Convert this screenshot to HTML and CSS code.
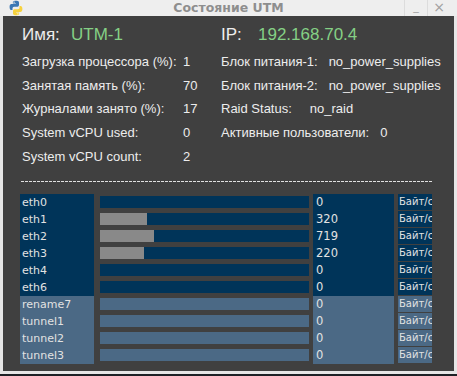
FILE: index.html
```html
<!DOCTYPE html>
<html lang="ru">
<head>
<meta charset="utf-8">
<title>Состояние UTM</title>
<link rel="stylesheet" href="styles.css">
</head>
<body>
<div class="titlebar">
  <div class="tb-left">
    <svg class="pyicon" width="16" height="16" viewBox="0 0 16 16">
      <path d="M7.8 0.8c-3 0-2.9 1.3-2.9 1.3v1.5h3v0.5H3.7S1.6 3.8 1.6 7s1.8 3.1 1.8 3.1h1.1V8.6s-0.1-1.8 1.8-1.8h3s1.7 0 1.7-1.7V2.5S11.3 0.8 7.8 0.8z" fill="#3b77b4"/>
      <circle cx="6.1" cy="2.2" r="0.6" fill="#fff"/>
      <path d="M8.2 15.2c3 0 2.9-1.3 2.9-1.3v-1.5h-3v-0.5h4.2s2.1 0.3 2.1-2.9-1.8-3.1-1.8-3.1h-1.1v1.5s0.1 1.8-1.8 1.8h-3s-1.7 0-1.7 1.7v2.6s-0.3 1.7 3.2 1.7z" fill="#f7d23e"/>
      <circle cx="9.9" cy="13.8" r="0.6" fill="#fff"/>
    </svg>
  </div>
  <div class="title">Состояние UTM</div>
  <div class="tb-right">
    <span class="wbtn">_</span>
    <span class="wbtn close">×</span>
  </div>
</div>
<div class="frame">
  <div class="content">
    <div class="info">
      <div class="col left">
        <div class="hdr"><span class="hkey hkey-l">Имя:</span><span class="green">UTM-1</span></div>
        <div class="rows">
          <div class="row"><span class="lab">Загрузка процессора (%):</span><span>1</span></div>
          <div class="row"><span class="lab">Занятая память (%):</span><span>70</span></div>
          <div class="row"><span class="lab">Журналами занято (%):</span><span>17</span></div>
          <div class="row"><span class="lab">System vCPU used:</span><span>0</span></div>
          <div class="row"><span class="lab">System vCPU count:</span><span>2</span></div>
        </div>
      </div>
      <div class="col right">
        <div class="hdr"><span class="hkey hkey-r">IP:</span><span class="green">192.168.70.4</span></div>
        <div class="rows">
          <div class="row"><span class="rlab">Блок питания-1:</span><span class="rval">no_power_supplies</span></div>
          <div class="row"><span class="rlab">Блок питания-2:</span><span class="rval">no_power_supplies</span></div>
          <div class="row"><span class="rlab">Raid Status:</span><span class="rval wide">no_raid</span></div>
          <div class="row"><span class="rlab">Активные пользователи:</span><span class="rval">0</span></div>
        </div>
      </div>
    </div>
    <div class="dash"></div>
    <div class="table">
      <div class="trow"><div class="name">eth0</div><div class="barwrap"><div class="bar"></div></div><div class="num">0</div><div class="unit">Байт/с</div></div>
      <div class="trow"><div class="name">eth1</div><div class="barwrap"><div class="bar"><div class="fill" style="width:47px"></div></div></div><div class="num">320</div><div class="unit">Байт/с</div></div>
      <div class="trow"><div class="name">eth2</div><div class="barwrap"><div class="bar"><div class="fill" style="width:54px"></div></div></div><div class="num">719</div><div class="unit">Байт/с</div></div>
      <div class="trow"><div class="name">eth3</div><div class="barwrap"><div class="bar"><div class="fill" style="width:44px"></div></div></div><div class="num">220</div><div class="unit">Байт/с</div></div>
      <div class="trow"><div class="name">eth4</div><div class="barwrap"><div class="bar"></div></div><div class="num">0</div><div class="unit">Байт/с</div></div>
      <div class="trow"><div class="name">eth6</div><div class="barwrap"><div class="bar"></div></div><div class="num">0</div><div class="unit">Байт/с</div></div>
      <div class="trow alt"><div class="name">rename7</div><div class="barwrap"><div class="bar"></div></div><div class="num">0</div><div class="unit">Байт/с</div></div>
      <div class="trow alt"><div class="name">tunnel1</div><div class="barwrap"><div class="bar"></div></div><div class="num">0</div><div class="unit">Байт/с</div></div>
      <div class="trow alt"><div class="name">tunnel2</div><div class="barwrap"><div class="bar"></div></div><div class="num">0</div><div class="unit">Байт/с</div></div>
      <div class="trow alt"><div class="name">tunnel3</div><div class="barwrap"><div class="bar"></div></div><div class="num">0</div><div class="unit">Байт/с</div></div>
    </div>
  </div>
</div>
<div class="taskbar"></div>
</body>
</html>
```
FILE: styles.css
```css
* { box-sizing: border-box; }
html, body { margin: 0; padding: 0; }
body {
  width: 457px;
  height: 376px;
  overflow: hidden;
  background: #e8e8e8;
  font-family: "Liberation Sans", Arial, sans-serif;
}
.titlebar {
  height: 16px;
  display: grid;
  grid-template-columns: 1fr auto 1fr;
  background: #eeeeee;
}
.tb-left { display: flex; align-items: center; padding-left: 8px; }
.pyicon { display: block; }
.title {
  font-family: "DejaVu Sans", sans-serif;
  font-weight: bold;
  font-size: 12.5px;
  line-height: 15px;
  color: #8e8e8e;
}
.tb-right { display: flex; justify-content: flex-end; padding-right: 7px; }
.wbtn {
  width: 23px;
  height: 16px;
  border-left: 1px solid #dcdcdc;
  color: #a0a0a0;
  font-family: "DejaVu Sans", sans-serif;
  font-size: 11px;
  line-height: 13px;
  text-align: center;
}
.wbtn.close { font-size: 14px; line-height: 15px; }
.frame {
  padding: 0 3px 3px 3px;
  background: #e6e6e6;
}
.content {
  height: 355px;
  background: #404040;
  padding-top: 7px;
  color: #ededed;
}
.info { display: flex; padding-left: 19px; }
.col.left { width: 199px; }
.hdr {
  height: 24px;
  display: flex;
  align-items: center;
  font-size: 17px;
  white-space: nowrap;
}
.hkey-l { width: 49px; }
.hkey-r { width: 37px; }
.green { color: #85d085; }
.rows { margin-top: 2.5px; }
.row {
  height: 23.75px;
  display: flex;
  align-items: center;
  font-size: 13px;
  white-space: nowrap;
}
.lab { width: 161px; }
.rval { margin-left: 11px; }
.rval.wide { margin-left: 18px; }
.dash {
  margin: 12.5px 0 0 18px;
  width: 412px;
  height: 1px;
  background-image: repeating-linear-gradient(to right, #e0e0e0 0 3px, transparent 3px 4px);
}
.table { margin: 12px 0 0 17px; }
.trow {
  display: flex;
  height: 17px;
  font-family: "DejaVu Sans", sans-serif;
  font-size: 11px;
  color: #e2e2e2;
  --cell: #003459;
}
.trow.alt { --cell: #4b6985; }
.name {
  width: 74px;
  background: var(--cell);
  padding-left: 2px;
  line-height: 17px;
}
.barwrap {
  width: 209px;
  margin-left: 6px;
  display: flex;
  align-items: center;
}
.bar {
  width: 100%;
  height: 12px;
  background: var(--cell);
}
.fill { height: 12px; background: #898989; }
.num {
  width: 81px;
  margin-left: 4px;
  background: var(--cell);
  padding-left: 3px;
  line-height: 17px;
  font-size: 11.5px;
}
.unit {
  width: 34px;
  height: 16px;
  margin-left: 4px;
  background: var(--cell);
  padding-left: 1px;
  font-size: 10px;
  line-height: 16px;
  white-space: nowrap;
  overflow: hidden;
}
.taskbar { height: 2px; background: #1e2126; }
```
